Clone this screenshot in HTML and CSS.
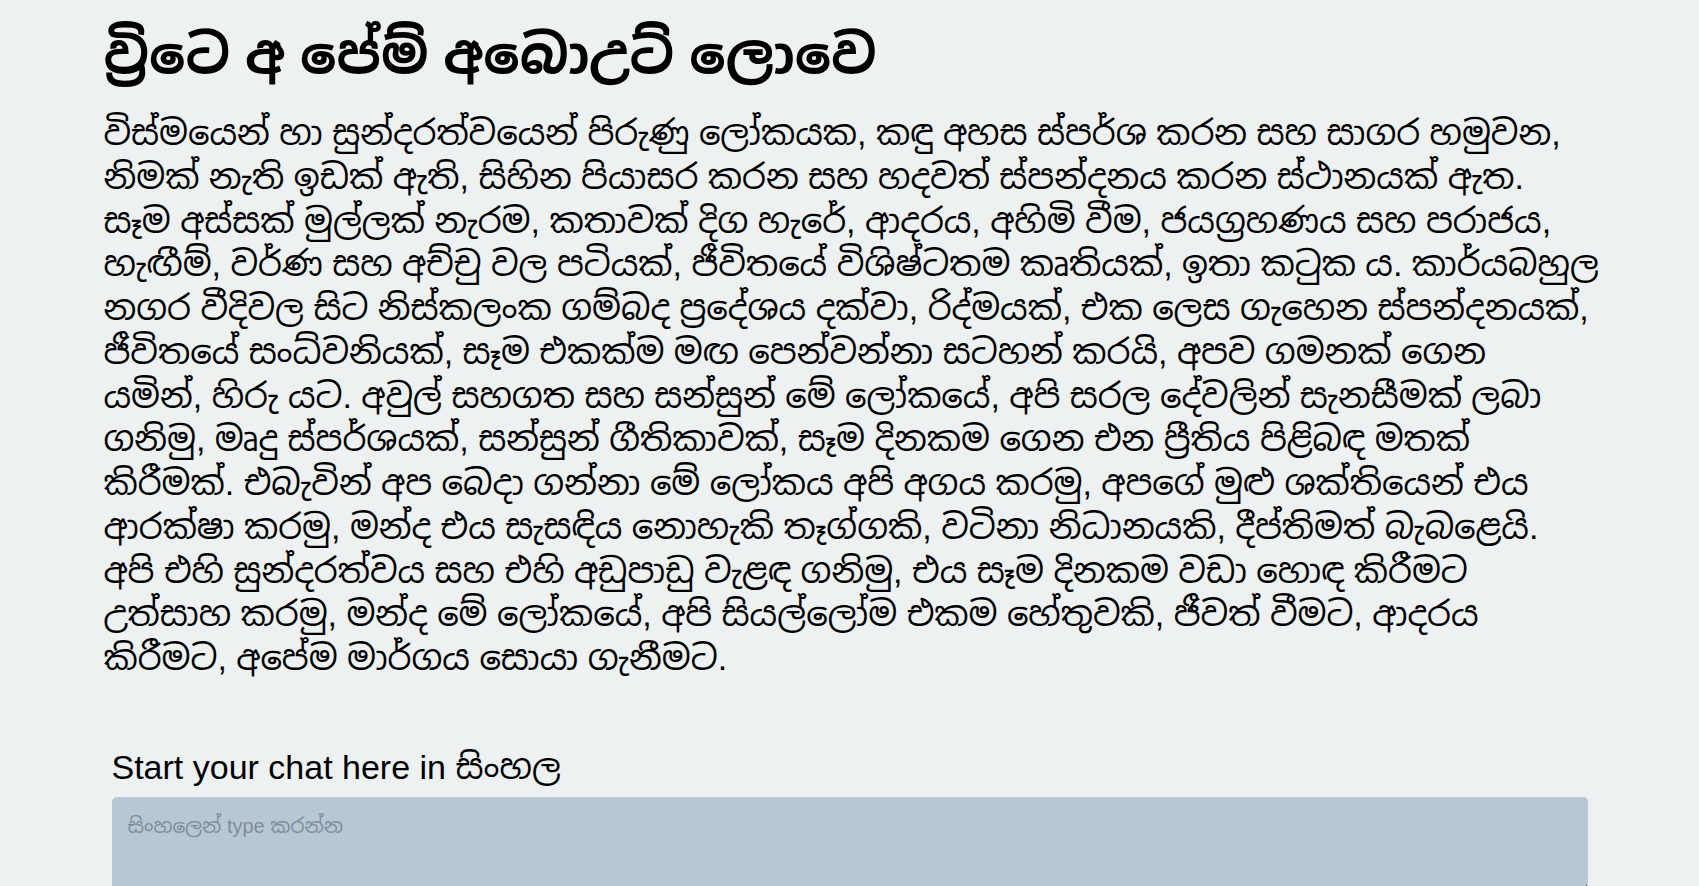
FILE: index.html
```html
<!DOCTYPE html>
<html lang="si">
<head>
<meta charset="utf-8">
<title>ලොවෙ</title>
<link rel="stylesheet" href="styles.css">
</head>
<body>
<main class="page">
  <h1 class="title">ව්‍රිටෙ අ පේම් අබොඋට් ලොවෙ</h1>
  <p class="poem">
    <span class="line">විස්මයෙන් හා සුන්දරත්වයෙන් පිරුණු ලෝකයක, කඳු අහස ස්පර්ශ කරන සහ සාගර හමුවන,</span>
    <span class="line">නිමක් නැති ඉඩක් ඇති, සිහින පියාසර කරන සහ හදවත් ස්පන්දනය කරන ස්ථානයක් ඇත.</span>
    <span class="line">සෑම අස්සක් මුල්ලක් නැරම, කතාවක් දිග හැරේ, ආදරය, අහිමි වීම, ජයග්‍රහණය සහ පරාජය,</span>
    <span class="line">හැඟීම්, වර්ණ සහ අච්චු වල පටියක්, ජීවිතයේ විශිෂ්ටතම කෘතියක්, ඉතා කටුක ය. කාර්යබහුල</span>
    <span class="line">නගර වීදිවල සිට නිස්කලංක ගම්බද ප්‍රදේශය දක්වා, රිද්මයක්, එක ලෙස ගැහෙන ස්පන්දනයක්,</span>
    <span class="line">ජීවිතයේ සංධ්වනියක්, සෑම එකක්ම මඟ පෙන්වන්නා සටහන් කරයි, අපව ගමනක් ගෙන</span>
    <span class="line">යමින්, හිරු යට. අවුල් සහගත සහ සන්සුන් මේ ලෝකයේ, අපි සරල දේවලින් සැනසීමක් ලබා</span>
    <span class="line">ගනිමු, මෘදු ස්පර්ශයක්, සන්සුන් ගීතිකාවක්, සෑම දිනකම ගෙන එන ප්‍රීතිය පිළිබඳ මතක්</span>
    <span class="line">කිරීමක්. එබැවින් අප බෙදා ගන්නා මේ ලෝකය අපි අගය කරමු, අපගේ මුළු ශක්තියෙන් එය</span>
    <span class="line">ආරක්ෂා කරමු, මන්ද එය සැසඳිය නොහැකි තෑග්ගකි, වටිනා නිධානයකි, දීප්තිමත් බැබළෙයි.</span>
    <span class="line">අපි එහි සුන්දරත්වය සහ එහි අඩුපාඩු වැළඳ ගනිමු, එය සෑම දිනකම වඩා හොඳ කිරීමට</span>
    <span class="line">උත්සාහ කරමු, මන්ද මේ ලෝකයේ, අපි සියල්ලෝම එකම හේතුවකි, ජීවත් වීමට, ආදරය</span>
    <span class="line">කිරීමට, අපේම මාර්ගය සොයා ගැනීමට.</span>
  </p>
  <section class="chat">
    <label class="chat-label" for="msg">Start your chat here in සිංහල</label>
    <textarea id="msg" class="chat-input" placeholder="සිංහලෙන් type කරන්න"></textarea>
  </section>
</main>
</body>
</html>
```
FILE: styles.css
```css
html, body {
  margin: 0;
  padding: 0;
  background: #edf1f2;
}
body {
  font-family: "Liberation Sans", Arial, "Noto Sans Sinhala", "Iskoola Pota", sans-serif;
  color: #000;
  overflow: hidden;
}
.page {
  max-width: 1492px;
  margin: 0 auto;
  padding: 0;
}
.title {
  font-size: 54px;
  font-weight: bold;
  margin: 0;
  padding-top: 12px;
  line-height: 84px;
}
.poem {
  font-size: 34px;
  line-height: 43.75px;
  margin: 0;
  padding-top: 16px;
}
.line {
  display: block;
  white-space: nowrap;
}
.chat {
  padding: 0 8px;
  margin-top: 64px;
  display: flex;
  flex-direction: column;
}
.chat-label {
  font-size: 34px;
  line-height: 44px;
  margin-bottom: 8px;
}
.chat-input {
  height: 96px;
  box-sizing: border-box;
  border: none;
  border-radius: 5px;
  background: #b8c7d4;
  padding: 16px 16px;
  font-family: "Liberation Sans", Arial, "Noto Sans Sinhala", sans-serif;
  font-size: 20px;
  resize: vertical;
}
.chat-input::placeholder {
  color: #7f8e9c;
}
```
